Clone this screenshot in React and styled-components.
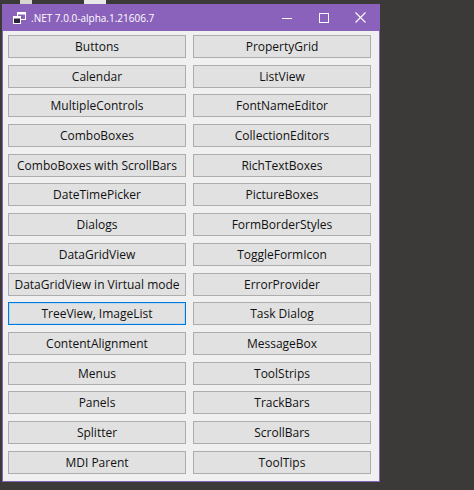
import React from "react";
import styled, { createGlobalStyle } from "styled-components";

const GlobalStyle = createGlobalStyle`
  html, body {
    margin: 0;
    padding: 0;
    background: #3b3a39;
  }
  body {
    width: 474px;
    height: 490px;
    overflow: hidden;
    font-family: "Open Sans", "Noto Sans", sans-serif;
  }
`;

const Desktop = styled.div`
  width: 474px;
  height: 490px;
  padding: 4px 0 0 2px;
  box-sizing: border-box;
  position: relative;
`;

// bits of desktop icons peeking above the window
const Peek = styled.div`
  position: absolute;
  top: 0;
  height: 4px;
  background: ${({ color }) => color};
  left: ${({ left }) => left}px;
  width: ${({ w }) => w}px;
`;

const Window = styled.div`
  width: 378px;
  height: 478px;
  box-sizing: border-box;
  border: 1px solid #8a64b9;
  border-top: none;
  background: #f0f0f0;
  display: flex;
  flex-direction: column;
`;

const TitleBar = styled.div`
  height: 27px;
  background: #8b62bb;
  color: #fff;
  display: flex;
  align-items: center;
  flex-shrink: 0;
`;

const AppIcon = styled.div`
  width: 16px;
  height: 16px;
  margin-left: 8px;
  display: flex;
  align-items: center;
  justify-content: center;
`;

const Title = styled.div`
  margin-left: 4px;
  font-size: 10px;
  flex: 1;
`;

const Caption = styled.div`
  width: 37px;
  height: 27px;
  display: flex;
  align-items: center;
  justify-content: center;
`;

const Grid = styled.div`
  display: grid;
  grid-template-columns: 178px 178px;
  column-gap: 7px;
  row-gap: 6.7px;
  grid-auto-rows: 23px;
  padding: 4px 0 0 5px;
`;

const Button = styled.button`
  margin: 0;
  padding: 0;
  box-sizing: border-box;
  background: #e1e1e1;
  border: 1px solid ${({ focused }) => (focused ? "#0078d7" : "#adadad")};
  box-shadow: ${({ focused }) => (focused ? "inset 0 0 0 1px #b9d7f1" : "none")};
  font-family: "Open Sans", "Noto Sans", sans-serif;
  font-size: 12px;
  color: #111;
  white-space: nowrap;
  cursor: pointer;
`;

const left = [
  "Buttons",
  "Calendar",
  "MultipleControls",
  "ComboBoxes",
  "ComboBoxes with ScrollBars",
  "DateTimePicker",
  "Dialogs",
  "DataGridView",
  "DataGridView in Virtual mode",
  "TreeView, ImageList",
  "ContentAlignment",
  "Menus",
  "Panels",
  "Splitter",
  "MDI Parent",
];

const right = [
  "PropertyGrid",
  "ListView",
  "FontNameEditor",
  "CollectionEditors",
  "RichTextBoxes",
  "PictureBoxes",
  "FormBorderStyles",
  "ToggleFormIcon",
  "ErrorProvider",
  "Task Dialog",
  "MessageBox",
  "ToolStrips",
  "TrackBars",
  "ScrollBars",
  "ToolTips",
];

export default function App() {
  return (
    <Desktop>
      <GlobalStyle />
      <Peek left={20} w={12} color="#d9d6cf" />
      <Peek left={84} w={22} color="#e8e8e8" />
      <Window>
        <TitleBar>
          <AppIcon>
            <svg width="13" height="12" viewBox="0 0 13 12">
              <rect x="4.5" y="0.5" width="8" height="7" fill="none" stroke="#fff" />
              <rect x="4.5" y="0.5" width="8" height="2" fill="#fff" />
              <rect x="0.5" y="4.5" width="7" height="7" fill="#2a2438" stroke="#fff" />
              <rect x="0.5" y="4.5" width="7" height="2" fill="#fff" />
            </svg>
          </AppIcon>
          <Title>.NET 7.0.0-alpha.1.21606.7</Title>
          <Caption>
            <svg width="10" height="10" viewBox="0 0 10 10">
              <path d="M0 5.5h10" stroke="#fff" strokeWidth="1" />
            </svg>
          </Caption>
          <Caption>
            <svg width="10" height="10" viewBox="0 0 10 10">
              <rect x="0.5" y="0.5" width="9" height="9" fill="none" stroke="#fff" />
            </svg>
          </Caption>
          <Caption>
            <svg width="11" height="11" viewBox="0 0 11 11">
              <path d="M0.5 0.5l10 10M10.5 0.5l-10 10" stroke="#fff" strokeWidth="1.1" />
            </svg>
          </Caption>
        </TitleBar>
        <Grid>
          {left.map((l, i) => (
            <React.Fragment key={l}>
              <Button focused={l === "TreeView, ImageList"}>{l}</Button>
              <Button>{right[i]}</Button>
            </React.Fragment>
          ))}
        </Grid>
      </Window>
    </Desktop>
  );
}
